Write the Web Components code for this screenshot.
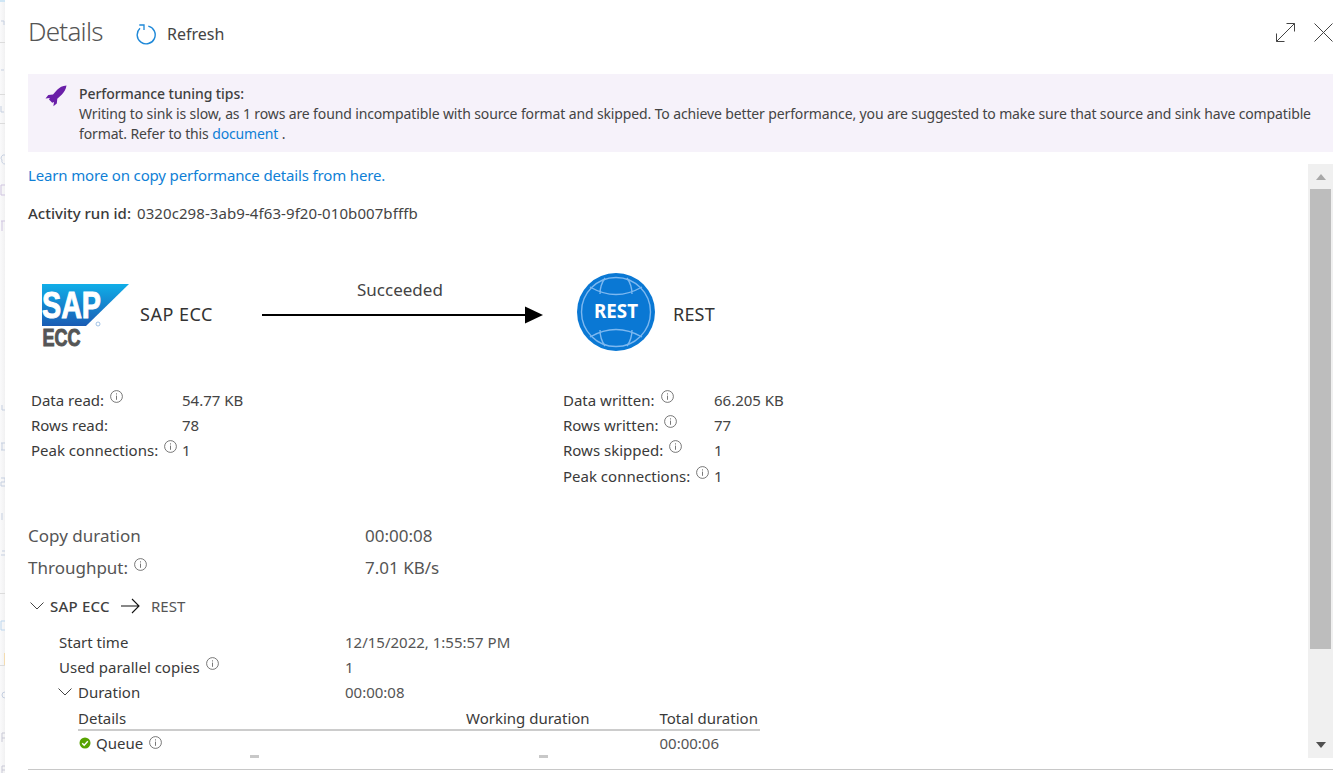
<!DOCTYPE html>
<html><head><meta charset="utf-8"><style>
html,body{margin:0;height:100%;overflow:hidden;background:#fff}
body{font-family:"Noto Sans","Open Sans",sans-serif;color:#333}
</style></head><body>
<details-panel></details-panel>
<script>
const def=(n,html)=>{customElements.define(n,class extends HTMLElement{constructor(){super();this.attachShadow({mode:'open'}).innerHTML=html}})};

def('info-icon',`<style>:host{display:inline-block;width:13px;height:13px;vertical-align:3px;margin-left:6px}</style><svg width="13" height="13" viewBox="0 0 13 13" fill="none" stroke="#555" stroke-width=".8" style="display:block"><circle cx="6.5" cy="6.5" r="5.9"/><path d="M6.5 5.600v4.200M6.500 3.300v1.200"/></svg>`);

def('metric-row',`<style>
:host{display:grid;grid-template-columns:151px auto;height:25.3px;align-items:center;font-size:15px;color:#444;white-space:nowrap}
.l{color:#3a3a3a}
</style><div class="l"><slot name="label"></slot></div><div><slot></slot></div>`);

def('panel-header',`<style>
:host{display:flex;align-items:center;height:74px;box-sizing:border-box;padding:0 6px 10px 28px}
h1{font-size:26px;font-weight:300;margin:0;color:#555;width:107px;letter-spacing:-.75px;position:relative;top:-1px}
.r{display:flex;align-items:center;gap:11px;font-size:16px;color:#444;position:relative;top:2px}
.sp{flex:1}
.a{display:flex;gap:19px;align-items:center}
svg{display:block}
</style><h1>Details</h1>
<div class="r"><svg width="21" height="21" viewBox="0 0 21 21" fill="none" stroke="#1e88d8" stroke-width="1.4"><path d="M13.300 2.100A9 9 0 1 1 5 4.300"/><path d="M4.300 1H9v5" stroke-width="1.300"/></svg><span>Refresh</span></div>
<div class="sp"></div>
<div class="a"><svg width="19" height="19" viewBox="0 0 19 19" fill="none" stroke="#444" stroke-width="1"><path d="M.5 18.500 18.500 .5M10.500 .5h8v8M.5 10.500v8h8"/></svg>
<svg width="19" height="19" viewBox="0 0 19 19" fill="none" stroke="#444" stroke-width="1"><path d="M.5 .5l18 18M18.500 .5l-18 18"/></svg></div>`);

def('tip-banner',`<style>
:host{display:flex;background:#f6f2fa;height:78px;margin-left:28px;margin-right:6px;padding-left:17px;box-sizing:border-box;font-size:14px;line-height:20px;color:#444;letter-spacing:-.13px}
svg{flex:none;margin-top:11px;margin-right:12px}
.t{padding-top:10px;padding-right:16px}
b{font-weight:500;display:block;color:#3f3f3f;letter-spacing:-.08px}
</style><svg width="22" height="22" viewBox="0 0 22 22"><path fill="#6a1fa8" fill-rule="evenodd" d="M21.500 .5c-4 .4-7 1.800-9.300 4.300L8 9.500 3.300 10 .5 13.500l4.300-.6-.8 1.700 3.200 3.200 1.800-.9-.6 4.400 3.400-2.800.5-4.800 4.600-4.100C18.800 7.300 21 4.500 21.500 .5z"/></svg>
<div class="t"><b>Performance tuning tips:</b><slot></slot></div>`);

def('flow-diagram',`<style>
:host{display:flex;align-items:center;height:120px;margin-left:42px}
.lbl{font-size:18px;color:#333;letter-spacing:.2px;white-space:nowrap}
.w{width:73px;flex:none;letter-spacing:.5px}
.sap{width:98px;flex:none;margin-top:4px}
.arrow{width:281px;margin-left:49px;position:relative;flex:none;height:20px;margin-top:2px}
.arrow span{position:absolute;left:95px;top:-27px;font-size:17px;line-height:24px;color:#444;white-space:nowrap}
.rest{margin:0 18px 4px 34px;flex:none}
svg{display:block}
</style>
<div class="sap"><svg width="88" height="72" viewBox="0 0 88 72" style="margin-bottom:-8px">
<defs><linearGradient id="g" x1="0" y1="0" x2="0" y2="1"><stop offset="0" stop-color="#10aee8"/><stop offset="1" stop-color="#1a5cb4"/></linearGradient></defs>
<path d="M0 0H87L44 42H0z" fill="url(#g)"/>
<text x="0" y="34" font-family="Liberation Sans" font-weight="700" font-size="36" textLength="59" lengthAdjust="spacingAndGlyphs" fill="#fff" stroke="#fff" stroke-width="1">SAP</text>
<circle cx="56" cy="40" r="2" fill="none" stroke="#8ab4e0" stroke-width=".8"/>
<text x="0.500" y="62" font-family="Liberation Sans" font-weight="700" font-size="23" textLength="38" lengthAdjust="spacingAndGlyphs" fill="#555" stroke="#555" stroke-width="1">ECC</text>
</svg></div>
<span class="lbl w">SAP ECC</span>
<div class="arrow"><span>Succeeded</span><svg width="281" height="20" viewBox="0 0 281 20"><path d="M0 10H268" stroke="#000" stroke-width="2"/><path d="M263 1.500l18 8.500-18 8.500z" fill="#000"/></svg></div>
<svg class="rest" width="78" height="78" viewBox="0 0 78 78"><circle cx="39" cy="39" r="39" fill="#0a78d4"/><g fill="none" stroke="#7db8f0" stroke-width="1.400"><circle cx="39" cy="39" r="34.500"/><path d="M13 14Q39 29 65 14M13 64Q39 49 65 64M28 5Q23 12 23 21M50 5Q55 12 55 21M23 57Q23 66 28 73M55 57Q55 66 50 73"/></g><text x="39" y="45" text-anchor="middle" font-family="Noto Sans" font-weight="700" font-size="19" textLength="44" lengthAdjust="spacingAndGlyphs" fill="#fff">REST</text></svg>
<span class="lbl">REST</span>`);

def('stats-columns',`<style>
:host{display:flex;height:113px;margin-left:31px}
.c{width:532px;flex:none}
</style><div class="c"><slot name="left"></slot></div><div class="c"><slot name="right"></slot></div>`);

def('summary-row',`<style>
:host{display:grid;grid-template-columns:337px auto;height:32px;align-items:center;margin-left:28px;font-size:17px;color:#555}
</style><div><slot name="label"></slot></div><div><slot></slot></div>`);

def('chevron-down',`<style>:host{display:inline-block;line-height:0}</style><svg width="14" height="8" viewBox="0 0 14 8" fill="none" stroke="#444" stroke-width="1"><path d="M.5 .5 7 7 13.500 .5"/></svg>`);

def('route-row',`<style>
:host{display:flex;align-items:center;height:32px;margin-left:30px;font-size:15px;color:#555;white-space:nowrap}
svg.a{margin:0 11px 0 11px;flex:none}
b{font-weight:500;margin-left:6px;color:#3f3f3f;width:60px;flex:none;letter-spacing:.2px}
</style><chevron-down></chevron-down><b>SAP ECC</b><svg class="a" width="19" height="16" viewBox="0 0 19 16" fill="none" stroke="#111" stroke-width="1.1"><path d="M0 8H18M11 1l7 7-7 7"/></svg><span>REST</span>`);

def('detail-row',`<style>
:host{display:grid;grid-template-columns:286px auto;height:25px;align-items:center;margin-left:59px;font-size:15px;color:#555;white-space:nowrap}
.l{display:flex;align-items:center;color:#3a3a3a}
</style><div class="l"><slot name="label"></slot></div><div><slot></slot></div>`);

def('duration-table',`<style>
:host{display:block;margin:.5px 0 0 78px;width:682px;font-size:15px;color:#444;position:relative;white-space:nowrap}
.g{display:grid;grid-template-columns:388px 193.500px auto}
.h{align-items:center;border-bottom:2px solid #ccc;box-sizing:border-box;height:26px;padding-top:2px;color:#3a3a3a}
.r{height:24px;align-items:center;color:#555}
.l{display:flex;align-items:center;padding-left:1px;color:#3a3a3a}
.ok{margin-right:5px;display:block;flex:none}
.d{position:absolute;top:50px;width:9px;height:3px;background:#c8c8c8}
</style><div class="g h"><div>Details</div><div>Working duration</div><div>Total duration</div></div>
<div class="g r"><div class="l"><svg class="ok" width="12" height="12" viewBox="0 0 12 12"><circle cx="6" cy="6" r="5.500" fill="#57a300"/><path d="M3.200 6.200 5.200 8.200 8.800 4.300" fill="none" stroke="#fff" stroke-width="1.400"/></svg>Queue<info-icon></info-icon></div><div></div><div>00:00:06</div></div>
<div class="d" style="left:172px"></div><div class="d" style="left:461px"></div>`);

def('fake-scrollbar',`<style>
:host{display:flex;flex-direction:column;width:25px;background:#f0f0f0;align-items:center;flex:none}
.u,.d{width:0;height:0;border-left:5.500px solid transparent;border-right:5.500px solid transparent;flex:none}
.u{border-bottom:6px solid #a8a8a8;margin-top:10px;margin-bottom:9px}
.t{width:21px;height:460px;background:#bdbdbd;flex:none}
.s{flex:1}
.d{border-top:6px solid #505050;margin-bottom:10px}
</style><div class="u"></div><div class="t"></div><div class="s"></div><div class="d"></div>`);

def('scroll-area',`<style>
:host{display:flex;height:594px;margin-top:12px;margin-right:6px}
.m{flex:1;min-width:0;overflow:hidden}
</style><div class="m"><slot></slot></div><fake-scrollbar></fake-scrollbar>`);

def('backdrop-strip',`<style>
:host{display:block;position:absolute;left:0;top:0;bottom:0;width:5px;background:linear-gradient(90deg,#fafafb,#f1f1f2);overflow:hidden}
svg{display:block}
</style><svg width="5" height="773" viewBox="0 0 5 773" fill="none" stroke-width="1">
<path d="M0 1H5" stroke="#cfe6f5" stroke-width="2"/>
<path d="M0 42.500H5M0 94.500H5M0 123.500H5M0 593.500H5M0 665.500H5" stroke="#dcdcdc"/>
<path d="M1 21h3v4M1 70h3M1 106v6h3M2 160a3 3 0 0 1 3-5M2 160a3 3 0 0 0 3 4M2 405v5h3M2 443v7M1 443h4M1 450h4M1 478h4v4H1v4h4M2 513v7M2 551h3M1 555h4M2 695a3 3 0 0 1 3-3M2 695a3 3 0 0 0 3 3" stroke="#c5cfe0"/>
<path d="M1 185h4M1 195h4M1 185v10M1 221h4M2 221v10" stroke="#cfc4e0"/>
<path d="M1 621h4M1 630h4M1 621v9" stroke="#bcd6ee"/>
<path d="M4.500 653v12" stroke="#f4dcb0"/>
<path d="M2 733v9M2 733h3M2 738h3M2 766v7M2 766h3M2 770h3" stroke="#c9c9d6"/>
</svg>`);

def('details-panel',`<style>
:host{display:block;position:relative;width:1339px;height:773px;overflow:hidden}
.link{margin:0 0 0 28px;height:22px;line-height:22px;font-size:15px;color:#0f7fd6;letter-spacing:-.15px;white-space:nowrap}
.run{margin:17px 0 0 28px;font-size:15px;height:20px;line-height:20px;color:#444;display:flex;white-space:nowrap}
.run b{font-weight:500;width:109px;flex:none;color:#3a3a3a}
.run span{letter-spacing:.08px}
.foot{position:absolute;left:28px;right:6px;top:769px;height:1px;background:#c8c8c8}
a{color:#0f7fd6;text-decoration:none}
</style>
<backdrop-strip></backdrop-strip>
<panel-header></panel-header>
<tip-banner>Writing to sink is slow, as 1 rows are found incompatible with source format and skipped. To achieve better performance, you are suggested to make sure that source and sink have compatible format. Refer to this <a href="#">document</a> .</tip-banner>
<scroll-area>
<div class="link">Learn more on copy performance details from here.</div>
<div class="run"><b>Activity run id:</b><span>0320c298-3ab9-4f63-9f20-010b007bfffb</span></div>
<flow-diagram style="margin-top:31px"></flow-diagram>
<stats-columns style="margin-top:13px">
<div slot="left">
<metric-row><span slot="label">Data read:<info-icon></info-icon></span>54.77 KB</metric-row>
<metric-row><span slot="label">Rows read:</span>78</metric-row>
<metric-row><span slot="label">Peak connections:<info-icon></info-icon></span>1</metric-row>
</div>
<div slot="right">
<metric-row><span slot="label">Data written:<info-icon></info-icon></span>66.205 KB</metric-row>
<metric-row><span slot="label">Rows written:<info-icon></info-icon></span>77</metric-row>
<metric-row><span slot="label">Rows skipped:<info-icon></info-icon></span>1</metric-row>
<metric-row><span slot="label">Peak connections:<info-icon></info-icon></span>1</metric-row>
</div>
</stats-columns>
<summary-row style="margin-top:19.6px"><span slot="label">Copy duration</span>00:00:08</summary-row>
<summary-row><span slot="label">Throughput:<info-icon></info-icon></span>7.01 KB/s</summary-row>
<route-row style="margin-top:6px"></route-row>
<detail-row style="margin-top:7.5px"><span slot="label">Start time</span>12/15/2022, 1:55:57 PM</detail-row>
<detail-row><span slot="label">Used parallel copies<info-icon></info-icon></span>1</detail-row>
<detail-row><span slot="label" style="margin-left:-1px;display:flex;align-items:center;gap:6px"><chevron-down></chevron-down>Duration</span>00:00:08</detail-row>
<duration-table></duration-table>
</scroll-area>
<div class="foot"></div>`);
</script></body></html>
